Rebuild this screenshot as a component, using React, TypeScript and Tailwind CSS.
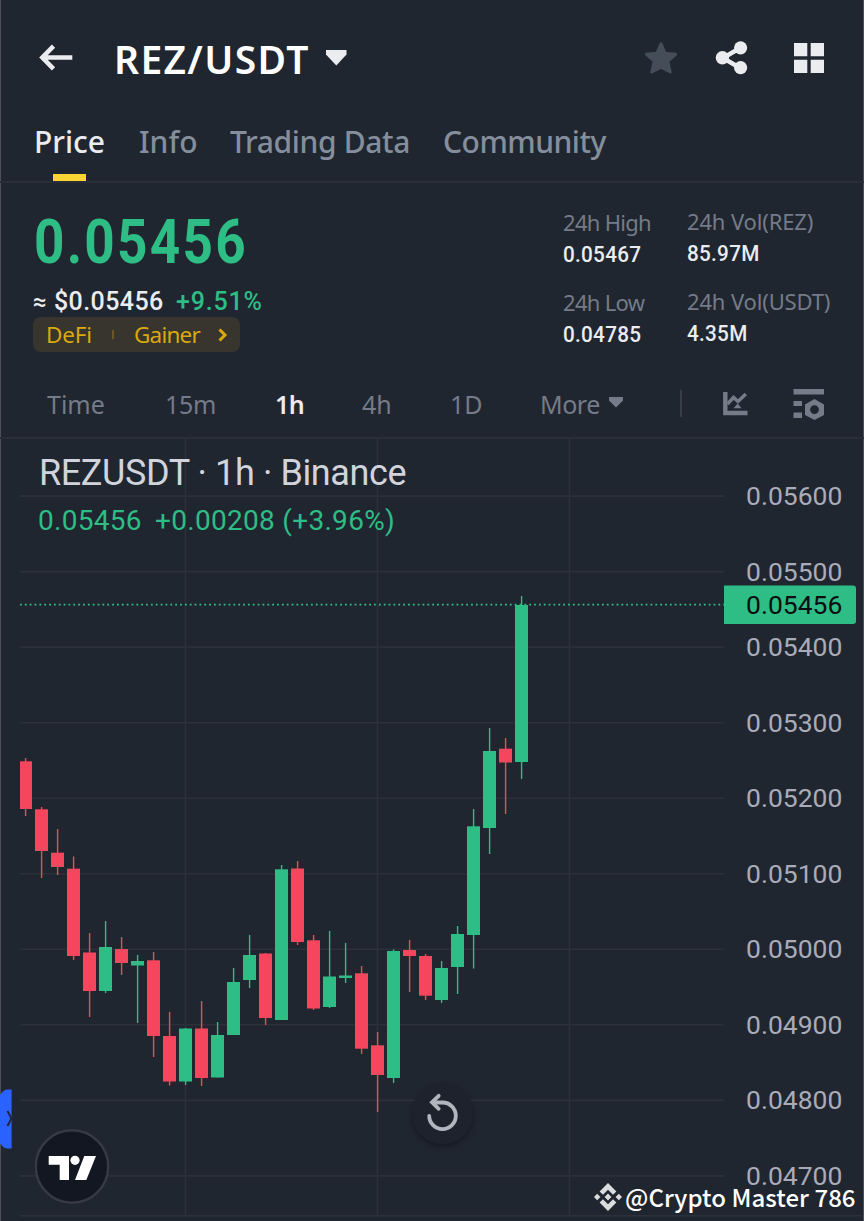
import type { ReactNode } from 'react';

const GREEN = '#2ebd85';
const RED = '#f6465d';

// [high, bodyTop, bodyBottom, low, rising], in page pixels
const candles: [number, number, number, number, boolean][] = [
  [758, 761.3, 809, 816, false],
  [807, 809.3, 851, 878, false],
  [829, 852.7, 867, 875, false],
  [856.5, 868.7, 956, 960, false],
  [933, 952.5, 991, 1017, false],
  [921, 947, 991, 993, true],
  [937, 949, 963, 975, false],
  [955, 961, 965.5, 1023, true],
  [952, 960.3, 1036, 1057, false],
  [1012, 1036, 1081.5, 1085.5, false],
  [1028, 1028.5, 1081.5, 1085, true],
  [1001, 1028.5, 1078, 1086, false],
  [1022, 1035, 1077.5, 1077.5, true],
  [968, 982, 1035, 1035, true],
  [935, 955, 980, 988, true],
  [953, 953.5, 1018, 1025, false],
  [865, 869.3, 1020, 1020, true],
  [861, 868.5, 942, 945, false],
  [935, 940.3, 1008.5, 1010, false],
  [931, 976.5, 1007, 1008, true],
  [943, 975.5, 978, 983, true],
  [966, 973.3, 1048.7, 1054, false],
  [1032, 1045.3, 1075, 1112, false],
  [949.5, 951, 1078, 1083, true],
  [940, 950, 956, 992, false],
  [954, 956, 995.7, 1000, false],
  [961, 968, 1000, 1003, true],
  [926, 934, 967, 994, true],
  [809, 826.3, 935, 968.5, true],
  [728, 751, 828, 854, true],
  [738, 748.7, 762.5, 814, false],
  [596, 605, 762, 779, true],
];

const priceLevels = ['0.05600', '0.05500', '0.05400', '0.05300', '0.05200', '0.05100', '0.05000', '0.04900', '0.04800', '0.04700'];

function Header() {
  return (
    <header className="flex h-[116px] items-center pl-[39px] pr-[40px]">
      <svg className="h-[28px] w-[34px]" viewBox="0 0 34 28" fill="none" stroke="#eaecef" strokeWidth="4.6">
        <path d="M33.3 13.5H4M14.5 2.2L3.4 13.5L14.5 24.8" />
      </svg>
      <h1 className="ml-[41px] mt-[1px] w-[212px] whitespace-nowrap text-[39px] font-semibold leading-[50px] tracking-[1.35px] text-white">REZ/USDT</h1>
      <svg className="h-[16px] w-[21px]" viewBox="0 0 21 16" fill="#eaecef">
        <path d="M0 0H20.5V4.5L10.3 15.5L0 4.5Z" />
      </svg>
      <div className="ml-auto flex items-center">
        <svg className="h-[34px] w-[34px]" viewBox="0 0 34 34" fill="#444d58" stroke="#444d58" strokeWidth="3" strokeLinejoin="round">
          <path d="M17 2.8L21 12.2L31.6 13.3L23.8 20.2L26.2 31L17 26.2L7.8 31L10.2 20.2L2.4 13.3L13 12.2Z" />
        </svg>
        <svg className="ml-[36px] mr-[1px] h-[34px] w-[34px]" viewBox="0 0 34 34" fill="#eaecef">
          <path d="M26 7L9 17L26 27" fill="none" stroke="#eaecef" strokeWidth="4.4" />
          <circle cx="8.4" cy="16.7" r="6.7" />
          <circle cx="26.6" cy="6.8" r="6.6" />
          <circle cx="26.6" cy="26.7" r="6.6" />
        </svg>
        <svg className="ml-[45px] h-[30px] w-[30px]" viewBox="0 0 30 30" fill="#eaecef">
          <path d="M0 0H13.3V13.3H0ZM16.7 0H30V13.3H16.7ZM0 16.7H13.3V30H0ZM16.7 16.7H30V30H16.7Z" />
        </svg>
      </div>
    </header>
  );
}

function Tabs() {
  return (
    <nav className="flex h-[67px] border-b-2 border-[#2a2e39] pl-[34px] text-[30px] font-medium leading-[52px] text-[#848e9c]">
      <div className="flex w-[105px] flex-col">
        <span className="h-[58px] text-[#eaecef]">Price</span>
        <span className="z-10 ml-[19px] h-[7px] w-[33px] shrink-0 bg-[#fcd535]" />
      </div>
      <span className="w-[91px] whitespace-nowrap">Info</span>
      <span className="w-[213px] whitespace-nowrap tracking-[-0.35px]">Trading Data</span>
      <span className="whitespace-nowrap tracking-[-0.5px]">Community</span>
    </nav>
  );
}

function Stat({ label, value }: { label: string; value: string }) {
  return (
    <div className="h-[80px] whitespace-nowrap">
      <div className="text-[22px] leading-[32px] text-[#757b88]">{label}</div>
      <div className="origin-left scale-x-[0.92] font-[Roboto] text-[22.5px] font-medium leading-[32px] tracking-[0.3px] text-[#eaecef]">{value}</div>
    </div>
  );
}

function Summary() {
  return (
    <section className="flex h-[189px] pl-[33px]">
      <div className="w-[530px] pt-[29px] font-[Roboto]">
        <div className="ml-[1px] h-[60px] origin-left scale-x-[0.87] text-[61px] font-bold leading-[60px] tracking-[2.6px] text-[#2ebd85]">0.05456</div>
        <div className="mt-[14px] flex h-[31px] whitespace-pre text-[25px] font-medium leading-[32px] text-[#eaecef]">
          <span className="w-[21px] text-[24px]">≈</span>
          <span className="w-[122px] tracking-[0.4px]">$0.05456</span>
          <span className="tracking-[0.8px] text-[#2ebd85]">+9.51%</span>
        </div>
        <div className="flex h-[35px] w-[207px] items-center rounded-lg bg-[#38352e] pl-[13px] font-[Noto_Sans] text-[22.5px] leading-[35px] text-[#d9a90d]">
          <span className="w-[66px] tracking-[-0.2px]">DeFi</span>
          <span className="h-[9px] w-[2px] bg-[#6b5725]" />
          <span className="ml-[20px] w-[84px] tracking-[-0.8px]">Gainer</span>
          <svg className="h-[14px] w-[10px]" viewBox="0 0 10 14" fill="none" stroke="#d9a90d" strokeWidth="3">
            <path d="M1.5 1.5L7 7L1.5 12.5" />
          </svg>
        </div>
      </div>
      <div className="w-[124px] pt-[23px] tracking-[-0.7px]">
        <Stat label="24h High" value="0.05467" />
        <Stat label="24h Low" value="0.04785" />
      </div>
      <div className="pt-[22px] tracking-[-0.15px]">
        <Stat label="24h Vol(REZ)" value="85.97M" />
        <Stat label="24h Vol(USDT)" value="4.35M" />
      </div>
    </section>
  );
}

function Intervals() {
  return (
    <div className="flex h-[67px] items-center border-b-2 border-[#2a2e39] pl-[47px] pr-[39px] pb-[1px] text-[25px] leading-[32px] text-[#757b88]">
      <span className="w-[118px]">Time</span>
      <span className="w-[110px] tracking-[-0.3px]">15m</span>
      <span className="w-[87px] font-semibold tracking-[-0.5px] text-[#eaecef]">1h</span>
      <span className="w-[88px]">4h</span>
      <span className="w-[90px]">1D</span>
      <span className="w-[69px] tracking-[-0.5px]">More</span>
      <svg className="-mt-[4px] h-[11px] w-[14px]" viewBox="0 0 14 11" fill="#757b88">
        <path d="M0 0H14V3.5L7 10.5L0 3.5Z" />
      </svg>
      <span className="-mt-[2px] ml-[57px] h-[27px] w-[2px] bg-[#373c47]" />
      <svg className="-mt-[1px] ml-[41px] h-[26px] w-[26px]" viewBox="0 0 26 26" fill="none" stroke="#757b88">
        <path d="M2.3 1V22H24.5" strokeWidth="4.4" />
        <path d="M4.5 13L10.5 6.5L15 10.5L22.8 3" strokeWidth="3.4" />
        <path d="M10.5 17.2L14.7 12.5L18.5 17.2Z" fill="#757b88" stroke="none" />
      </svg>
      <svg className="-mt-[1px] ml-auto h-[32px] w-[32px]" viewBox="0 0 32 32" fill="#757b88">
        <path d="M0.5 1H31V6.4H0.5ZM0.5 13H9V18H0.5ZM0.5 24.5H9V30H0.5Z" />
        <path fillRule="evenodd" d="M21.5 11L31 16.5V27L21.5 32L12 27V16.5ZM21.5 17.2A4.4 4.4 0 1 0 21.5 26A4.4 4.4 0 1 0 21.5 17.2Z" />
      </svg>
    </div>
  );
}

function Overlay({ className, children }: { className: string; children: ReactNode }) {
  return <div className={`absolute ${className}`}>{children}</div>;
}

function Chart() {
  return (
    <section className="relative h-[782px] font-[Roboto]">
      <svg className="block h-[782px] w-[864px]" viewBox="0 439 864 782">
        <g stroke="#2b303a" strokeWidth="1.6">
          {priceLevels.map((p, i) => (
            <path key={p} d={`M20 ${496.1 + i * 75.53}H724`} />
          ))}
          <path d="M20 1215.7H862M185.5 439V1215M377.5 439V1215M569.5 439V1215" />
        </g>
        <path d="M20 604.7H724" stroke={GREEN} strokeWidth="1.8" strokeDasharray="1.8 3.05" />
        {candles.map(([high, top, bottom, low, rising], i) => {
          const x = 25.5 + i * 16;
          const left = i === 0 ? 20 : x - 6.5;
          return (
            <g key={i} fill={rising ? GREEN : RED}>
              <rect x={x - 0.6} y={high} width="1.4" height={low - high} />
              <rect x={left} y={top} width={x + 6.5 - left} height={bottom - top} />
            </g>
          );
        })}
        <path d="M724 585.5H853a3 3 0 0 1 3 3V621a3 3 0 0 1 -3 3H724Z" fill={GREEN} />
        <g fontFamily="Roboto" fontSize="26.5" fill="#a9acb8">
          {priceLevels.map((p, i) => (
            <text key={p} x="746" y={505 + i * 75.53}>{p}</text>
          ))}
          <text x="746" y="614" fill="#0b0e11">0.05456</text>
        </g>
      </svg>

      <Overlay className="left-[38px] top-[9px] whitespace-pre">
        <div className="ml-[1px] text-[36px] leading-[50px] tracking-[-0.4px] text-[#d1d4dc]">REZUSDT · 1h · Binance</div>
        <div className="flex text-[28px] leading-[46px] tracking-[0.3px] text-[#2ebd85]">
          <span className="w-[117px]">0.05456</span>
          <span>+0.00208 (+3.96%)</span>
        </div>
      </Overlay>

      <Overlay className="left-0 top-[650px]">
        <svg className="h-[60px] w-[12px]" viewBox="0 0 12 60">
          <path d="M11.6 0.5H7Q3 1 0 6V54Q3 59 7 59.5H11.6Z" fill="#2962ff" />
          <path d="M7.5 22L11.4 29.5L7.5 37" fill="none" stroke="#1e2430" strokeWidth="1.8" />
        </svg>
      </Overlay>

      <Overlay className="left-[35px] top-[690px]">
        <svg className="h-[75px] w-[75px]" viewBox="35 1129 75 75">
          <circle cx="72" cy="1166.5" r="36.2" fill="#131722" stroke="#363a45" strokeWidth="2.4" />
          <g fill="#fff">
            <path d="M48.7 1156H69V1180H59.7V1164.7H48.7ZM84.3 1156H96L86.3 1180H75Z" />
            <circle cx="75" cy="1160.3" r="4.6" />
          </g>
        </svg>
      </Overlay>

      <Overlay className="left-[412px] top-[644px] h-[61px] w-[61px] rounded-full bg-[#1e222d] shadow-[0_3px_5px_rgba(8,12,18,0.45)]">
        <svg className="h-[61px] w-[61px]" viewBox="412 1083 61 61" fill="none" stroke="#b2b5be" strokeWidth="3.8" strokeLinecap="round">
          <path d="M429.2 1115.8A13.3 13.3 0 1 0 442.5 1102.5H433" />
          <path d="M438.7 1095.8L432 1102.3L438.7 1108.8" />
        </svg>
      </Overlay>

      <Overlay className="left-[594px] top-[741px] flex items-center whitespace-nowrap">
        <svg className="h-[28px] w-[28px]" viewBox="0 0 28 28" fill="#dcdcdc">
          <path d="M14 0L22.4 8.4L19 11.8L14 6.8L9 11.8L5.6 8.4Z" />
          <path d="M14 28L22.4 19.6L19 16.2L14 21.2L9 16.2L5.6 19.6Z" />
          <path d="M14 10.6L17.4 14L14 17.4L10.6 14ZM3.2 10.8L6.4 14L3.2 17.2L0 14ZM24.8 10.8L28 14L24.8 17.2L21.6 14Z" />
        </svg>
        <span className="ml-[3px] font-['Noto_Sans_CJK_SC',sans-serif] text-[24px] font-medium leading-[34px] tracking-[0.05px] text-white">@Crypto Master 786</span>
      </Overlay>
    </section>
  );
}

export default function App() {
  return (
    <main className="h-[1221px] w-[864px] overflow-hidden bg-[#202630] font-['Noto_Sans',sans-serif] shadow-[inset_1px_0_0_#4b505b,inset_-1px_0_0_#4b505b]">
      <Header />
      <Tabs />
      <Summary />
      <Intervals />
      <Chart />
    </main>
  );
}
